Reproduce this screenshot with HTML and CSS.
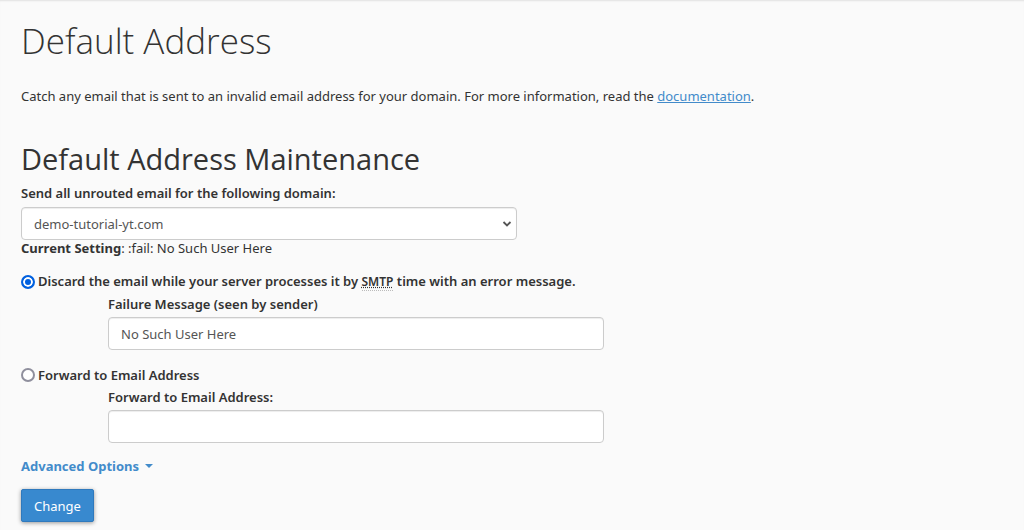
FILE: index.html
```html
<!DOCTYPE html>
<html lang="en">
<head>
<meta charset="utf-8">
<title>Default Address</title>
<link rel="stylesheet" href="styles.css">
</head>
<body>
<main class="page">
  <h1 class="page-title">Default Address</h1>
  <p class="description">Catch any email that is sent to an invalid email address for your domain. For more information, read the <a href="#">documentation</a>.</p>
  <h2 class="section-title">Default Address Maintenance</h2>
  <form>
    <label class="label" for="domain">Send all unrouted email for the following domain:</label>
    <div class="select-wrap">
      <select class="control" id="domain"><option>demo-tutorial-yt.com</option></select>
      <svg class="chevron" viewBox="0 0 10 6" aria-hidden="true"><path d="M1.5 1L5 4.5 8.5 1"/></svg>
    </div>
    <p class="current"><strong>Current Setting</strong>: :fail: No Such User Here</p>
    <div class="option">
      <div class="choice">
        <input type="radio" name="action" id="fail" checked>
        <label for="fail">Discard the email while your server processes it by <abbr title="Simple Mail Transfer Protocol">SMTP</abbr> time with an error message.</label>
      </div>
      <div class="nested">
        <label class="label" for="message">Failure Message (seen by sender)</label>
        <input class="control" type="text" id="message" value="No Such User Here">
      </div>
    </div>
    <div class="option">
      <div class="choice">
        <input type="radio" name="action" id="forward">
        <label for="forward">Forward to Email Address</label>
      </div>
      <div class="nested">
        <label class="label" for="address">Forward to Email Address:</label>
        <input class="control" type="text" id="address">
      </div>
    </div>
    <a class="advanced" href="#">Advanced Options <span class="caret"></span></a>
    <div><button class="submit" type="submit">Change</button></div>
  </form>
</main>
</body>
</html>
```

FILE: styles.css
```css
* { box-sizing: border-box; }
body {
  margin: 0;
  background: #fafafa;
  color: #333;
  font: 13px/20px "Noto Sans", "Open Sans", sans-serif;
}
.page { padding: 21px 21px 8px; box-shadow: inset 0 2px 2px -1px #0000001a; }
h1, h2, p { margin: 0; }
h1, h2 { font-family: "Open Sans", sans-serif; }
.page-title { font-size: 35px; line-height: 40px; font-weight: 300; }
.description { margin-top: 25px; }
a { color: #428bca; }
.section-title { margin-top: 36px; font-size: 29px; line-height: 34px; font-weight: 400; }
.label { display: block; font-weight: 600; line-height: 20px; margin-bottom: 4px; }
form > .label { margin-top: 7px; }
.control {
  display: block;
  width: 100%;
  height: 33px;
  padding: 0 12px;
  border: 1px solid #ccc;
  border-radius: 4px;
  background: #fff;
  box-shadow: inset 0 1px 1px #00000013;
  color: #555;
  font: inherit;
  appearance: none;
}
.select-wrap { position: relative; max-width: 496px; }
.chevron {
  position: absolute;
  right: 5px;
  top: 14px;
  width: 10px;
  height: 6px;
  fill: none;
  stroke: #555;
  stroke-width: 1.8;
  pointer-events: none;
}
.current { line-height: 16px; }
.option { margin-top: 15px; }
.choice { display: flex; align-items: center; gap: 3px; font-weight: 600; line-height: 20px; }
.choice input {
  appearance: none;
  margin: 0;
  width: 14px;
  height: 14px;
  border: 2px solid #8f8f9d;
  border-radius: 50%;
  background: #fff;
}
.choice input:checked {
  border-color: #0060df;
  background: #0060df;
  box-shadow: inset 0 0 0 2px #fff;
}
abbr {
  font-size: 12px;
  border-bottom: 1px dotted #bbb;
}
.nested { margin-left: 87px; max-width: 496px; }
.nested .label { margin-top: 2px; margin-bottom: 3px; }
.advanced {
  display: inline-flex;
  align-items: center;
  gap: 6px;
  margin-top: 13px;
  font-weight: 700;
  text-decoration: none;
}
.caret { border: 4px solid transparent; border-top-color: currentColor; border-bottom: 0; }
.submit {
  margin-top: 13px;
  height: 33px;
  padding: 0 12px;
  border: 1px solid #2f79bd;
  border-radius: 2px;
  background: #3889cf;
  color: #fff;
  font: inherit;
  box-shadow: 0 1px 4px #0006;
}
```
